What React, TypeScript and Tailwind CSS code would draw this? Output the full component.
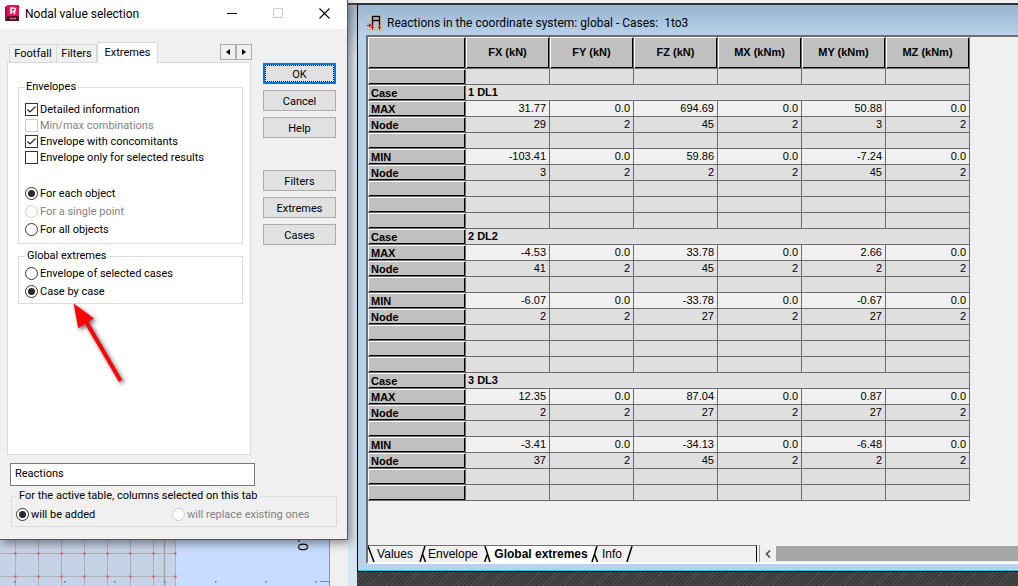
import React, { useState } from 'react';

const CASES = [
  {
    name: '1 DL1',
    max: ['31.77', '0.0', '694.69', '0.0', '50.88', '0.0'],
    maxNode: ['29', '2', '45', '2', '3', '2'],
    min: ['-103.41', '0.0', '59.86', '0.0', '-7.24', '0.0'],
    minNode: ['3', '2', '2', '2', '45', '2'],
  },
  {
    name: '2 DL2',
    max: ['-4.53', '0.0', '33.78', '0.0', '2.66', '0.0'],
    maxNode: ['41', '2', '45', '2', '2', '2'],
    min: ['-6.07', '0.0', '-33.78', '0.0', '-0.67', '0.0'],
    minNode: ['2', '2', '27', '2', '27', '2'],
  },
  {
    name: '3 DL3',
    max: ['12.35', '0.0', '87.04', '0.0', '0.87', '0.0'],
    maxNode: ['2', '2', '27', '2', '27', '2'],
    min: ['-3.41', '0.0', '-34.13', '0.0', '-6.48', '0.0'],
    minNode: ['37', '2', '45', '2', '2', '2'],
  },
];

const COLUMNS = ['FX (kN)', 'FY (kN)', 'FZ (kN)', 'MX (kNm)', 'MY (kNm)', 'MZ (kNm)'];
const EMPTY = ['', '', '', '', '', ''];

interface OptionProps {
  label: string;
  checked: boolean;
  disabled?: boolean;
  onChange?: () => void;
}

const CheckOption: React.FC<OptionProps> = ({ label, checked, disabled, onChange }) => (
  <label className={`flex items-center h-4 gap-[2px] ${disabled ? 'text-[#838383]' : 'text-black'}`}>
    <span className="relative block w-[13px] h-[13px] shrink-0">
      <input
        type="checkbox"
        checked={checked}
        disabled={disabled}
        onChange={onChange}
        className="peer appearance-none block w-[13px] h-[13px] bg-white border border-[#333] disabled:border-[#ccc]"
      />
      <svg viewBox="0 0 13 13" className="absolute inset-0 hidden peer-checked:block pointer-events-none">
        <path d="M2.5 6.5 5 9l5.5-5.5" fill="none" stroke="#222" strokeWidth="1.2" />
      </svg>
    </span>
    <span className="pt-[2px] whitespace-nowrap">{label}</span>
  </label>
);

const RadioOption: React.FC<OptionProps & { name: string }> = ({ name, label, checked, disabled, onChange }) => (
  <label className={`flex items-center h-[18px] gap-[2px] ${disabled ? 'text-[#838383]' : 'text-black'}`}>
    <span className="relative block w-[13px] h-[13px] shrink-0">
      <input
        type="radio"
        name={name}
        checked={checked}
        disabled={disabled}
        onChange={onChange}
        className="peer appearance-none block w-[13px] h-[13px] rounded-full bg-white border border-[#333] disabled:border-[#ccc]"
      />
      <span className="absolute inset-[3px] rounded-full bg-[#2a2a2a] hidden peer-checked:block pointer-events-none" />
    </span>
    <span className="pt-[2px] whitespace-nowrap">{label}</span>
  </label>
);

const DialogButton: React.FC<{ label: string; primary?: boolean }> = ({ label, primary }) => (
  <button
    className={`h-[21px] w-full pt-[2px] bg-[#e1e1e1] flex items-center justify-center ${
      primary ? 'border-2 border-[#0078d7] outline-dotted outline-1 outline-black -outline-offset-3' : 'border border-[#adadad]'
    }`}
  >
    {label}
  </button>
);

const AppIcon = () => (
  <svg width="15" height="17" viewBox="0 0 15 17" aria-hidden="true">
    <path d="M0 2 3 0v14l-3 2z" fill="#a50d3c" />
    <path d="M2 0h12v12H2z" fill="#e51050" />
    <path d="M2 11h12v5H0l2-2z" fill="#5c0a22" />
    <path d="M6 9V3h2.5a1.6 1.6 0 0 1 0 3.5H6m2.5 0L10 9" fill="none" stroke="#fff" strokeWidth="1.6" />
    <path d="M5 13.5h6" stroke="#d8a0b0" strokeWidth="1.5" strokeDasharray="1.5 .7" />
  </svg>
);

const SupportIcon = () => (
  <svg width="16" height="16" viewBox="0 0 16 16" aria-hidden="true">
    <path d="M0 0h16v16H0z" fill="#c0c0c0" />
    <path d="M5.5 12V1.5h7V12M5.5 5.5h7" fill="none" stroke="#000" strokeWidth="1.3" />
    <path d="M0 10.5h5M12.5 10v5M5.5 10v5M11 12.5h3M4 12.5h3" stroke="#f00" />
    <path d="m2 8.5 3 2-3 2z" fill="#f00" />
  </svg>
);

const ModelView = () => (
  <svg viewBox="0 0 357 46" width="357" height="46" className="block" aria-hidden="true">
    <rect width="330" height="46" fill="#c8dcff" />
    <rect width="176" height="46" fill="#c6d2e6" />
    <rect x="329" width="1" height="46" fill="#8b93a3" />
    <rect x="330" width="18" height="46" fill="#f0f0f0" />
    <rect x="348" width="9" height="46" fill="#d6e5f3" />
    <path
      d="M15.5 0v46M38.5 0v46M61.5 0v46M84.5 0v46M107.5 0v46M130.5 0v46M153.5 0v46M175.5 0v46M0 13.5h176M0 36.5h176"
      stroke="#aeb0b6"
    />
    <path d="M164.5 0v46" stroke="#a3a89f" strokeWidth="1.5" />
    {[15, 38, 61, 84, 107, 130, 153, 175].map((x) => (
      <g key={x} fill="#f04048">
        <rect x={x - 0.5} y="12.5" width="2" height="2" />
        <rect x={x - 0.5} y="35.5" width="2" height="2" />
      </g>
    ))}
    {[14, 64, 114, 164, 215, 265, 315].map((x) => (
      <rect key={x} x={x} y="41" width="1.5" height="1.5" fill="#5a64dc" />
    ))}
    <path d="M320 41.5h10" stroke="#7d8797" />
    <text transform="translate(298 -1) rotate(90)" className="text-[14px] font-['Liberation_Sans',Arial,sans-serif]">.0</text>
  </svg>
);

const Dialog = () => {
  const [detailed, setDetailed] = useState(true);
  const [concomitants, setConcomitants] = useState(true);
  const [selectedOnly, setSelectedOnly] = useState(false);
  const [scope, setScope] = useState<'each' | 'all'>('each');
  const [globalMode, setGlobalMode] = useState<'envelope' | 'case'>('case');
  const [text, setText] = useState('Reactions');

  return (
    <section className="relative z-10 w-[348px] bg-[#f0f0f0] border-r border-b border-[#555] shadow-[2px_3px_9px_rgba(0,0,0,0.45)] font-[Roboto,sans-serif] text-[11px] leading-4 pb-3">
      <header className="h-[29px] bg-white flex items-center pl-[5px] pb-[2px]">
        <AppIcon />
        <h1 className="ml-[5px] text-[12px] flex-1 whitespace-nowrap">Nodal value selection</h1>
        <button aria-label="Minimize" className="w-[46px] flex justify-center">
          <svg width="11" height="11" viewBox="0 0 11 11"><path d="M0 5.5h10" stroke="#000" /></svg>
        </button>
        <button aria-label="Maximize" disabled className="w-[46px] flex justify-center">
          <svg width="11" height="11" viewBox="0 0 11 11"><path d="M.5.5h9v9h-9z" fill="none" stroke="#ccc" /></svg>
        </button>
        <button aria-label="Close" className="w-[46px] flex justify-center">
          <svg width="11" height="11" viewBox="0 0 11 11"><path d="M.5.5l10 10M10.5.5l-10 10" stroke="#000" strokeWidth="1.1" /></svg>
        </button>
      </header>

      <div className="flex pl-[7px] pr-[11px] pt-[13px] gap-3">
        <div className="w-[244px]">
          <div className="flex items-end h-5 pl-[2px]" role="tablist">
            <button role="tab" className="h-[18px] w-12 pt-px border border-b-0 border-[#d9d9d9]">Footfall</button>
            <button role="tab" className="h-[18px] w-10 pt-px border border-b-0 border-l-0 border-[#d9d9d9]">Filters</button>
            <button role="tab" aria-selected="true" className="relative h-[21px] w-[61px] -mb-px bg-white border border-b-0 border-[#d9d9d9]">
              Extremes
            </button>
            <div className="ml-auto -mr-px self-start flex pt-[2px]">
              <button aria-label="Previous tab" className="w-4 h-4 border border-[#adadad] flex items-center justify-center">
                <svg width="4" height="6" viewBox="0 0 4 6"><path d="M4 0v6L0 3z" /></svg>
              </button>
              <button aria-label="Next tab" className="w-4 h-4 border border-[#adadad] flex items-center justify-center">
                <svg width="4" height="6" viewBox="0 0 4 6"><path d="M0 0v6l4-3z" /></svg>
              </button>
            </div>
          </div>

          <div className="h-[393px] bg-white border border-[#d9d9d9] pl-[10px] pr-[7px] pt-4">
            <fieldset className="h-[165px] border border-[#dcdcdc] px-[6px]">
              <legend className="px-px">Envelopes</legend>
              <div className="pt-[6px]">
                <CheckOption label="Detailed information" checked={detailed} onChange={() => setDetailed(!detailed)} />
                <CheckOption label="Min/max combinations" checked={false} disabled />
                <CheckOption label="Envelope with concomitants" checked={concomitants} onChange={() => setConcomitants(!concomitants)} />
                <CheckOption label="Envelope only for selected results" checked={selectedOnly} onChange={() => setSelectedOnly(!selectedOnly)} />
              </div>
              <div className="pt-[19px]">
                <RadioOption name="scope" label="For each object" checked={scope === 'each'} onChange={() => setScope('each')} />
                <RadioOption name="scope" label="For a single point" checked={false} disabled />
                <RadioOption name="scope" label="For all objects" checked={scope === 'all'} onChange={() => setScope('all')} />
              </div>
            </fieldset>
            <fieldset className="mt-1 h-[56px] border border-[#dcdcdc] px-[6px]">
              <legend className="px-[2px]">Global extremes</legend>
              <RadioOption name="global" label="Envelope of selected cases" checked={globalMode === 'envelope'} onChange={() => setGlobalMode('envelope')} />
              <RadioOption name="global" label="Case by case" checked={globalMode === 'case'} onChange={() => setGlobalMode('case')} />
            </fieldset>
          </div>
        </div>

        <div className="flex-1 flex flex-col gap-[6px] pt-[21px]">
          <DialogButton label="OK" primary />
          <DialogButton label="Cancel" />
          <DialogButton label="Help" />
          <div className="pt-[26px] flex flex-col gap-[6px]">
            <DialogButton label="Filters" />
            <DialogButton label="Extremes" />
            <DialogButton label="Cases" />
          </div>
        </div>
      </div>

      <input
        aria-label="Table name"
        value={text}
        onChange={(e) => setText(e.target.value)}
        className="block mt-2 ml-[10px] w-[245px] h-[23px] px-1 pb-[3px] bg-white border border-[#7a7a7a] outline-none"
      />
      <fieldset className="ml-[11px] mr-[10px] mt-[2px] h-[39px] border border-[#dcdcdc] px-1">
        <legend className="ml-px px-[2px]">For the active table, columns selected on this tab</legend>
        <div className="flex pt-px">
          <div className="w-[156px]">
            <RadioOption name="apply" label="will be added" checked onChange={() => undefined} />
          </div>
          <RadioOption name="apply" label="will replace existing ones" checked={false} disabled />
        </div>
      </fieldset>

      <svg className="absolute left-[70px] top-[300px] pointer-events-none" width="64" height="92" viewBox="0 0 64 92" aria-hidden="true">
        <g fill="#f00" className="drop-shadow-[2px_2px_2px_rgba(0,0,0,0.6)]">
          <path d="M4 4 8.5 28 15 23.5 49 81.5 52 80 18 21.5 23.5 18.5z" stroke="#f00" strokeWidth=".6" />
        </g>
      </svg>
    </section>
  );
};

const RowHeader: React.FC<{ label: string }> = ({ label }) => (
  <th
    scope="row"
    className="h-4 px-[3px] py-0 bg-[#c0c0c0] border-r border-b border-[#6d6d6d] text-left align-bottom leading-[13px] shadow-[inset_1px_1px_0_#fff,inset_-1px_-1px_0_#000]"
  >
    {label}
  </th>
);

const ValueRow: React.FC<{ label?: string; values?: string[]; light?: boolean }> = ({ label = '', values = EMPTY, light }) => (
  <tr className={light ? 'bg-[#f0f0f0]' : 'bg-[#dfdfdf]'}>
    <RowHeader label={label} />
    {values.map((value, i) => (
      <td key={i} className="h-4 p-0 pr-[3px] border-r border-b border-[#6d6d6d] text-right leading-[15px]">
        {value}
      </td>
    ))}
  </tr>
);

const ReactionsTable = () => (
  <table className="table-fixed border-separate border-spacing-0 w-[602px] font-['Liberation_Sans',Arial,sans-serif] text-[11px]">
    <colgroup>
      <col className="w-[98px]" />
      {COLUMNS.map((c) => <col key={c} className="w-[84px]" />)}
    </colgroup>
    <thead>
      <tr>
        {['', ...COLUMNS].map((c) => (
          <th
            key={c}
            scope="col"
            className="h-8 p-0 bg-[#c0c0c0] border-r border-b border-[#6d6d6d] shadow-[inset_1px_1px_0_#fff,inset_-1px_-1px_0_#000]"
          >
            {c}
          </th>
        ))}
      </tr>
    </thead>
    <tbody>
      <ValueRow />
      {CASES.map((item, i) => (
        <React.Fragment key={item.name}>
          <tr className="bg-[#dfdfdf]">
            <RowHeader label="Case" />
            <td colSpan={6} className="h-4 p-0 pl-[2px] border-r border-b border-[#6d6d6d] font-bold leading-[15px]">{item.name}</td>
          </tr>
          <ValueRow label="MAX" values={item.max} light />
          <ValueRow label="Node" values={item.maxNode} />
          <ValueRow />
          <ValueRow label="MIN" values={item.min} light />
          <ValueRow label="Node" values={item.minNode} />
          <ValueRow />
          <ValueRow />
          {i < CASES.length - 1 && <ValueRow />}
        </React.Fragment>
      ))}
    </tbody>
  </table>
);

const Slash: React.FC<{ kind: 'start' | 'cross' | 'crossLeft' | 'end'; active?: 'left' | 'right' }> = ({ kind, active }) => (
  <svg width="7" height="16" viewBox="0 0 7 16" className="shrink-0" aria-hidden="true">
    {active === 'right' && <path d="M1 0h6v16z" fill="#fff" />}
    {active === 'left' && <path d="M0 0h6L1 16H0z" fill="#fff" />}
    {kind === 'start' && <path d="M0 0 6 16" stroke="#000" strokeWidth="1.5" />}
    {kind === 'end' && <path d="M6 0 1 16" stroke="#000" strokeWidth="1.5" />}
    {kind === 'cross' && <path d="M6 0 1 16M3.5 8l3 8" stroke="#000" strokeWidth="1.5" />}
    {kind === 'crossLeft' && <path d="M1 0 6 16M3.5 8 .5 16" stroke="#000" strokeWidth="1.5" />}
  </svg>
);

const SheetTabs = () => (
  <div className="flex h-[17px] font-['Liberation_Sans',Arial,sans-serif] text-[12px] leading-4">
    <div className="w-[389px] shrink-0 flex border-t border-r border-t-[#6d6d6d] border-r-black" role="tablist">
      <Slash kind="start" />
      <button role="tab" className="w-11 pr-1">Values</button>
      <Slash kind="cross" />
      <button role="tab" className="w-[58px] pr-1">Envelope</button>
      <Slash kind="crossLeft" active="right" />
      <button role="tab" aria-selected="true" className="w-[100px] font-bold bg-white whitespace-nowrap">Global extremes</button>
      <Slash kind="cross" active="left" />
      <button role="tab" className="w-7">Info</button>
      <Slash kind="end" />
    </div>
    <div className="flex-1 ml-[2px] flex border-l border-[#999]">
      <button aria-label="Scroll left" className="w-4 flex items-center justify-center">
        <svg width="6" height="8" viewBox="0 0 6 8"><path d="M5 .5 1.5 4 5 7.5" fill="none" stroke="#505050" strokeWidth="1.7" /></svg>
      </button>
      <div className="flex-1 my-px bg-[#a6a6a6]" />
    </div>
  </div>
);

const App = () => (
  <main className="flex h-screen overflow-hidden bg-[#3c3c3c]">
    <div className="w-[357px] shrink-0">
      <div className="flex bg-[#f0f0f0]">
        <Dialog />
        <div className="flex-1 mt-[3px] border-t-2 border-[#444] bg-linear-to-b from-[#a4b8cc] to-[#d6e5f3] to-10%" />
      </div>
      <ModelView />
    </div>

    <div className="flex-1 min-w-0 flex flex-col bg-[repeating-linear-gradient(135deg,#3b3b3b_0px,#3b3b3b_2px,#4d4d4d_2px,#4d4d4d_3px)]">
      <div className="h-[3px] bg-[#f0f0f0]" />
      <section className="h-[569px] flex flex-col bg-[#b9d1ea] border-l border-t-2 border-b border-black border-t-[#333]">
        <header className="h-[30px] flex items-center gap-1 pl-[9px] pt-[5px] bg-linear-to-b from-[#99b4d1] to-[#b9d1ea]">
          <SupportIcon />
          <h2 className="font-[Roboto,sans-serif] text-[12px] whitespace-pre">Reactions in the coordinate system: global - Cases:  1to3</h2>
        </header>
        <div className="flex-1 ml-2 flex flex-col border-l-2 border-t-2 border-b-2 border-l-[#6d6d6d] border-t-[#6d6d6d] border-b-white bg-[#f0f0f0]">
          <ReactionsTable />
          <div className="mt-auto">
            <SheetTabs />
          </div>
        </div>
        <div className="h-[6px]" />
        <div className="h-px bg-[#19d3e6]" />
      </section>
    </div>
  </main>
);

export default App;
